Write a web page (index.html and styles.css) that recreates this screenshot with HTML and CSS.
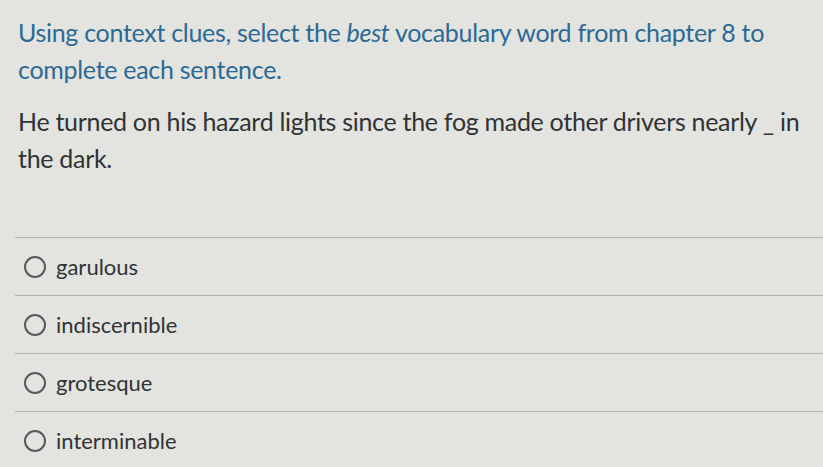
FILE: index.html
```html
<!DOCTYPE html>
<html lang="en">
<head>
<meta charset="utf-8">
<title>Vocabulary question</title>
<link rel="stylesheet" href="styles.css">
</head>
<body>
<main class="question">
  <p class="prompt">Using context clues, select the <em>best</em> vocabulary word from chapter 8 to complete each sentence.</p>
  <p class="stem">He turned on his hazard lights since the fog made other drivers nearly _ in the dark.</p>
  <ul class="options">
    <li class="option"><span class="radio"></span><span class="label">garulous</span></li>
    <li class="option"><span class="radio"></span><span class="label">indiscernible</span></li>
    <li class="option"><span class="radio"></span><span class="label">grotesque</span></li>
    <li class="option"><span class="radio"></span><span class="label">interminable</span></li>
  </ul>
</main>
</body>
</html>
```

FILE: styles.css
```css
html, body {
  margin: 0;
  padding: 0;
  background: #e3e3df;
  height: 100%;
  overflow: hidden;
}

.question {
  font-family: Lato, "Open Sans", sans-serif;
  padding: 14px 0 0 15px;
}

.prompt,
.stem {
  margin: 0 12px 0 3px;
  font-size: 25px;
  letter-spacing: -0.3px;
  line-height: 37px;
}

.prompt {
  color: #2b6a96;
}

.stem {
  margin-top: 15px;
  color: #2f3336;
}

.options {
  list-style: none;
  margin: 60px 0 0 0;
  padding: 0;
}

.option {
  display: flex;
  align-items: center;
  gap: 10px;
  height: 58px;
  border-top: 1.5px solid #b3b3b0;
  padding-left: 9px;
  box-sizing: border-box;
}

.radio {
  width: 18px;
  height: 18px;
  border: 2px solid #555a5e;
  border-radius: 50%;
  flex: none;
}

.label {
  font-size: 22px;
  color: #2f3336;
}
```
